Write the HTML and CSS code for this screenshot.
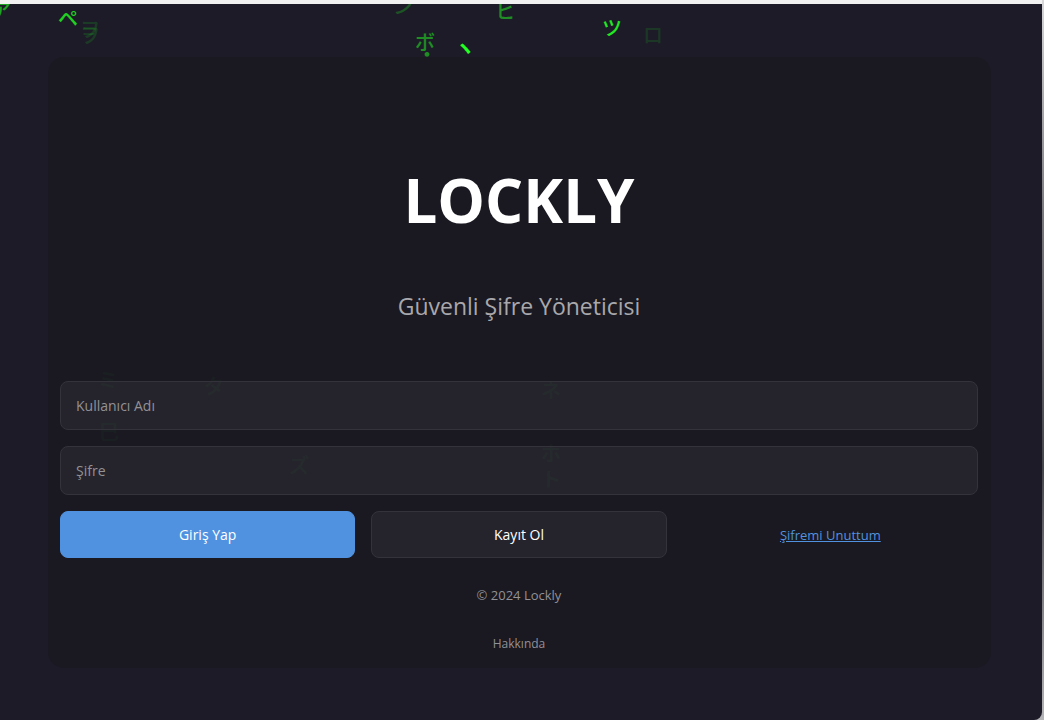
FILE: index.html
```html
<!DOCTYPE html>
<html lang="tr">

<head>
    <meta charset="UTF-8">
    <meta name="viewport" content="width=device-width, initial-scale=1.0">
    <title>Lockly</title>
    <link rel="stylesheet" href="styles.css">
</head>

<body>
    <div class="window">
        <!-- matrix rain -->
        <div class="rain" lang="ja" aria-hidden="true">
            <span class="drop drop-1">ア</span>
            <span class="drop drop-2">ペ</span>
            <span class="drop drop-3">ヲ</span>
            <span class="drop drop-3 trail">ヲ</span>
            <span class="drop drop-4">ン</span>
            <span class="drop drop-5">ボ</span>
            <span class="drop drop-5 dot">・</span>
            <span class="drop drop-6">ヽ</span>
            <span class="drop drop-7">ヒ</span>
            <span class="drop drop-8">ツ</span>
            <span class="drop drop-9">ロ</span>
            <span class="drop faint drop-10">ミ</span>
            <span class="drop faint drop-11">タ</span>
            <span class="drop faint drop-12">巳</span>
            <span class="drop faint drop-13">ネ</span>
            <span class="drop faint drop-14">ズ</span>
            <span class="drop faint drop-15">ホ</span>
            <span class="drop faint drop-16">ト</span>
        </div>
        <main class="card">
            <h1 class="title">LOCKLY</h1>
            <p class="subtitle">Güvenli Şifre Yöneticisi</p>
            <form class="login-form">
                <input class="field" type="text" placeholder="Kullanıcı Adı" aria-label="Kullanıcı Adı">
                <input class="field" type="password" placeholder="Şifre" aria-label="Şifre">
                <div class="actions">
                    <button class="btn btn-primary" type="submit">Giriş Yap</button>
                    <button class="btn" type="button">Kayıt Ol</button>
                    <a class="forgot" href="#">Şifremi Unuttum</a>
                </div>
            </form>
            <footer class="footer">
                <p class="copyright">© 2024 Lockly</p>
                <a class="about" href="#">Hakkında</a>
            </footer>
        </main>
    </div>
</body>

</html>
```
FILE: styles.css
```css
* {
    box-sizing: border-box;
}

body {
    margin: 0;
    background: linear-gradient(#d8d8da, #77777c 30%, #45454c 65%, #b5b5b8);
    font-family: "Segoe UI", "Open Sans", "Noto Sans CJK JP", sans-serif;
    color: #fff;
}

.window {
    position: relative;
    min-height: 100vh;
    margin-right: 2px;
    padding: 53px 51px 52px 48px;
    border-top: 4px solid #f1f1f1;
    border-bottom-right-radius: 8px;
    background: #1c1b27;
    overflow: hidden;
}

/* rain */
.rain {
    position: absolute;
    inset: 0;
    font-family: "Noto Sans CJK JP", sans-serif;
    font-size: 20px;
    font-weight: 500;
    line-height: 24px;
    color: #22ff22;
}

.drop {
    position: absolute;
}

.faint {
    opacity: 0.3;
}

.drop-1 { left: -9px; top: -6px; opacity: 0.6; }
.drop-2 { left: 58px; top: 2px; opacity: 0.8; }
.drop-3 { left: 80px; top: 13px; opacity: 0.14; }
.drop-3.trail { top: 19px; }
.drop-4 { left: 393px; top: -10px; opacity: 0.25; }
.drop-5 { left: 415px; top: 26px; opacity: 0.5; }
.drop-5.dot { left: 417px; top: 38px; }
.drop-6 { left: 455px; top: 32px; font-weight: 700; }
.drop-7 { left: 495px; top: -5px; opacity: 0.5; }
.drop-8 { left: 602px; top: 12px; opacity: 0.9; }
.drop-9 { left: 643px; top: 19px; opacity: 0.12; }
.drop-10 { left: 98px; top: 364px; }
.drop-11 { left: 204px; top: 370px; }
.drop-12 { left: 99px; top: 416px; }
.drop-13 { left: 541px; top: 374px; }
.drop-14 { left: 289px; top: 449px; }
.drop-15 { left: 541px; top: 437px; }
.drop-16 { left: 541px; top: 463px; }

/* card */
.card {
    position: relative;
    padding: 99px 13px 14px 12px;
    border-radius: 16px;
    background: rgba(27, 25, 33, 0.9);
    text-align: center;
}

.title {
    margin: 0 0 46px;
    font-size: 60px;
    line-height: 88px;
    font-weight: 700;
}

.subtitle {
    margin: 0 0 59px;
    font-size: 23px;
    line-height: 32px;
    color: #a9a8ac;
}

.login-form {
    display: flex;
    flex-direction: column;
    gap: 16px;
}

.field {
    width: 100%;
    height: 49px;
    padding: 0 15px;
    border: 1px solid #34333b;
    border-radius: 8px;
    background: rgba(255, 255, 255, 0.05);
    font-family: inherit;
    font-size: 14px;
    color: #fff;
}

.field::placeholder {
    color: #929196;
    opacity: 1;
}

.actions {
    display: grid;
    grid-template-columns: repeat(3, 1fr);
    gap: 16px;
    align-items: center;
}

.btn {
    height: 47px;
    border: 1px solid #34333b;
    border-radius: 8px;
    background: rgba(255, 255, 255, 0.05);
    font-family: inherit;
    font-size: 14px;
    color: #fff;
    cursor: pointer;
}

.btn-primary {
    border-color: #5092df;
    background: #5092df;
}

.forgot {
    font-size: 13px;
    color: #5092df;
}

.footer {
    padding-top: 27px;
    line-height: 20px;
    color: #929196;
}

.copyright {
    margin: 0 0 29px;
    font-size: 13px;
}

.about {
    display: block;
    font-size: 12px;
    color: inherit;
    text-decoration: none;
}
```
